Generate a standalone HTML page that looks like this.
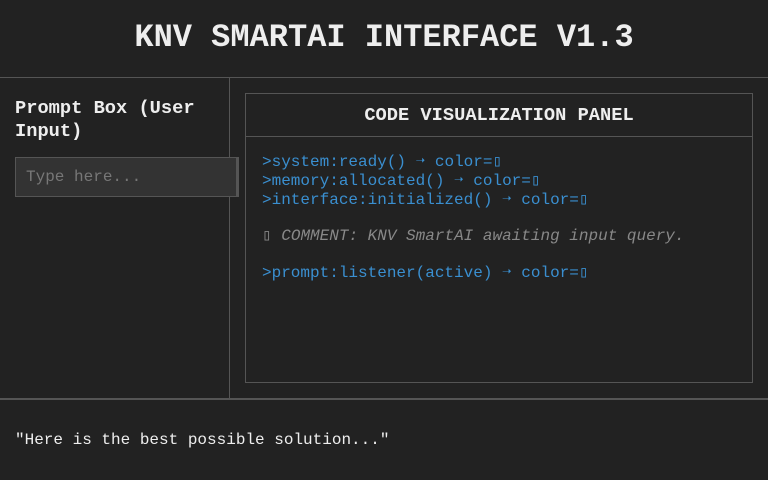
<!DOCTYPE html>
<html><head><style>
*{margin:0;padding:0;box-sizing:border-box}
body{width:768px;height:480px;background:#222;color:#eee;font-family:"Liberation Mono",monospace;position:relative;overflow:hidden}
.h{position:absolute;left:0;top:0;width:768px;height:78px;border-bottom:1px solid #555;text-align:center;font-weight:bold;font-size:32px;line-height:76px;color:#eee}
.l{position:absolute;left:0;top:78px;width:230px;height:320px;border-right:1px solid #555}
.l h3{position:absolute;left:15px;top:19px;font-size:18.72px;line-height:23px;font-weight:bold;color:#eee}
.in{position:absolute;left:15px;top:79px;width:223px;height:40px;background:#333;border:1px solid #555;color:#777;font-size:16px;padding-left:10px;line-height:38px}
.in:after{content:"";position:absolute;right:-2px;top:-1px;width:3px;height:40px;background:#555}
.p{position:absolute;left:245px;top:93px;width:508px;height:290px;border:1px solid #555}
.ph{height:43px;border-bottom:1px solid #555;text-align:center;font-weight:bold;font-size:18.72px;line-height:43px}
.c{position:absolute;left:16px;font-size:16px;line-height:19px;color:#3a8fd0;white-space:pre}
.g{color:#888;font-style:italic}
.b{position:absolute;left:0;top:398px;width:768px;height:82px;border-top:2px solid #555;font-size:16px;line-height:20px;padding:30px 0 0 15px;color:#eee}
</style></head><body>
<div class="h">KNV SMARTAI INTERFACE V1.3</div>
<div class="l"><h3>Prompt Box (User<br>Input)</h3><div class="in">Type here...</div></div>
<div class="p"><div class="ph">CODE VISUALIZATION PANEL</div>
<div class="c" style="top:59px">&gt;system:ready() ➝ color=▯
&gt;memory:allocated() ➝ color=▯
&gt;interface:initialized() ➝ color=▯</div>
<div class="c g" style="top:133px">▯ COMMENT: KNV SmartAI awaiting input query.</div>
<div class="c" style="top:170px">&gt;prompt:listener(active) ➝ color=▯</div></div>
<div class="b">"Here is the best possible solution..."</div>
</body></html>
